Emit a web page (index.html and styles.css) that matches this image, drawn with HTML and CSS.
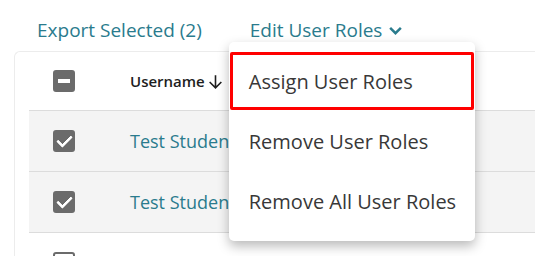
FILE: index.html
```html
<!DOCTYPE html>
<html lang="en">
<head>
    <meta charset="UTF-8">
    <meta name="viewport" content="width=device-width, initial-scale=1.0">
    <title>Users</title>
    <link rel="stylesheet" href="styles.css">
</head>
<body>
    <div class="toolbar">
        <a class="toolbar-link" href="#">Export Selected (2)</a>
        <div class="roles-menu">
            <a class="toolbar-link" href="#">Edit User Roles
                <svg class="chevron" width="15" height="15" viewBox="0 0 14 14"><path d="M2 4.5 L7 9.5 L12 4.5" fill="none" stroke="currentColor" stroke-width="2.3"/></svg>
            </a>
            <ul class="dropdown">
                <li class="dropdown-item focused">Assign User Roles</li>
                <li class="dropdown-item">Remove User Roles</li>
                <li class="dropdown-item">Remove All User Roles</li>
            </ul>
        </div>
    </div>

    <div class="card">
        <div class="row header-row">
            <span class="checkbox partial"></span>
            <span class="col-head">Username
                <svg width="17" height="17" viewBox="0 0 16 16"><path d="M8 2 V14 M2.5 8.5 L8 14 L13.5 8.5" fill="none" stroke="currentColor" stroke-width="1.5"/></svg>
            </span>
            <span></span>
        </div>
        <div class="row selected">
            <span class="checkbox checked"></span>
            <a class="user-link" href="#">Test Student</a>
            <span></span>
        </div>
        <div class="row selected">
            <span class="checkbox checked"></span>
            <a class="user-link" href="#">Test Student</a>
            <span></span>
        </div>
        <div class="row">
            <span class="checkbox"></span>
            <a class="user-link" href="#">Graham</a>
            <span class="user-id">2049331</span>
        </div>
    </div>
</body>
</html>
```

FILE: styles.css
```css
body {
    margin: 0;
    font-family: "Open Sans", Arial, sans-serif;
    background: #ffffff;
    color: #262626;
    overflow: hidden;
    height: 256px;
}

.toolbar {
    display: flex;
    align-items: flex-start;
    gap: 48px;
    padding: 17px 0 0 37px;
    height: 51px;
    box-sizing: border-box;
}

.toolbar-link {
    color: #2a7b8d;
    text-decoration: none;
    font-size: 19px;
    line-height: 26px;
    display: flex;
    align-items: center;
    gap: 6px;
}

.chevron {
    margin-top: 1px;
}

.roles-menu {
    position: relative;
}

.dropdown {
    position: absolute;
    top: 25px;
    left: -21px;
    width: 246px;
    margin: 0;
    padding: 9px 0 10px;
    list-style: none;
    background: #ffffff;
    border-radius: 5px;
    box-shadow: 0 5px 12px rgba(0, 0, 0, 0.28);
    z-index: 10;
}

.dropdown-item {
    height: 60px;
    display: flex;
    align-items: center;
    padding-left: 20px;
    font-size: 20px;
    color: #383838;
    box-sizing: border-box;
}

.dropdown-item.focused {
    outline: 3px solid #ff0000;
    outline-offset: -4px;
    border-radius: 3px;
}

.card {
    border: 1px solid #ececec;
    border-right: none;
    border-radius: 6px 0 0 6px;
    margin-left: 14px;
    padding-left: 14px;
}

.row {
    display: grid;
    grid-template-columns: 101px 173px 1fr;
    align-items: center;
    height: 60px;
    border-bottom: 1px solid #dcdcdc;
    font-size: 18px;
}

.row .checkbox {
    margin-left: 24px;
}

.header-row {
    height: 58px;
}

.selected {
    background: #f4f4f4;
}

.col-head {
    font-size: 15px;
    font-weight: 600;
    color: #1e1e1e;
    display: flex;
    align-items: center;
    gap: 2px;
}

.user-link {
    color: #2a7b8d;
    text-decoration: none;
}

.user-id {
    color: #262626;
}

.checkbox {
    width: 22px;
    height: 22px;
    box-sizing: border-box;
    border: 2px solid #6b6b6b;
    border-radius: 3px;
    background: #ffffff;
    position: relative;
}

.checkbox.checked,
.checkbox.partial {
    background: #6b6b6b;
}

.checkbox.partial::after {
    content: "";
    position: absolute;
    left: 3px;
    right: 3px;
    top: 7px;
    height: 4px;
    background: #ffffff;
}

.checkbox.checked::after {
    content: "";
    position: absolute;
    left: 5px;
    top: 0;
    width: 6px;
    height: 12px;
    border: solid #ffffff;
    border-width: 0 3px 3px 0;
    border-radius: 1px;
    transform: rotate(45deg);
}
```
